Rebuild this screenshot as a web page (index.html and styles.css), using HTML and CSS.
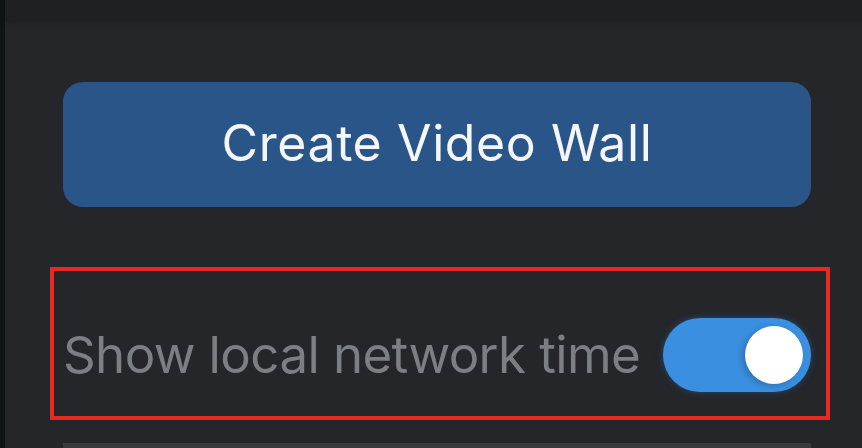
FILE: index.html
```html
<!DOCTYPE html>
<html>
<head>
<meta charset="utf-8">
<link rel="stylesheet" href="styles.css">
</head>
<body>
<div class="screen">
  <div class="topbar"></div>
  <div class="content">
    <button class="create-btn">Create Video Wall</button>
    <div class="highlight">
      <div class="setting-row">
        <span class="setting-label">Show local network time</span>
        <span class="toggle"><span class="knob"></span></span>
      </div>
    </div>
    <div class="next-row"></div>
  </div>
</div>
</body>
</html>
```
FILE: styles.css
```css
html, body {
  margin: 0;
  padding: 0;
  width: 862px;
  height: 448px;
  overflow: hidden;
  background: #25262a;
}
.screen {
  width: 862px;
  height: 448px;
  background: #25262a;
  border-left: 5px solid #111417;
  box-sizing: border-box;
  display: flex;
  flex-direction: column;
  font-family: Inter, "Noto Sans", sans-serif;
}
.topbar {
  height: 22px;
  background: #1f2023;
  box-shadow: 0 2px 6px rgba(0,0,0,0.15);
  flex: none;
}
.content {
  padding: 60px 0 0 58px;
  display: flex;
  flex-direction: column;
}
.create-btn {
  width: 748px;
  height: 125px;
  border: none;
  border-radius: 20px;
  background: #2a5589;
  color: #f4f6f9;
  font-family: Inter, "Noto Sans", sans-serif;
  font-size: 50px;
  font-weight: 400;
  padding: 0 0 4px 0;
  letter-spacing: 0.6px;
}
.highlight {
  margin-top: 60px;
  margin-left: -13px;
  width: 780px;
  height: 153px;
  box-sizing: border-box;
  border: 4px solid #e8291f;
  display: flex;
  align-items: center;
  padding-top: 22px;
}
.setting-row {
  display: flex;
  align-items: center;
  justify-content: space-between;
  width: 748px;
  margin-left: 9px;
}
.setting-label {
  color: #7b7e82;
  font-size: 51px;
  letter-spacing: -0.6px;
}
.toggle {
  width: 148px;
  height: 74px;
  border-radius: 37px;
  background: #3a8fe0;
  box-shadow: 0 0 6px rgba(40,110,180,0.5);
  display: flex;
  align-items: center;
  justify-content: flex-end;
  padding-right: 8px;
  box-sizing: border-box;
}
.knob {
  width: 58px;
  height: 58px;
  border-radius: 50%;
  background: #ffffff;
  box-shadow: -3px 2px 6px rgba(0,0,0,0.2);
}
.next-row {
  margin-top: 23px;
  width: 748px;
  height: 6px;
  background: #3a3b3f;
}
```
